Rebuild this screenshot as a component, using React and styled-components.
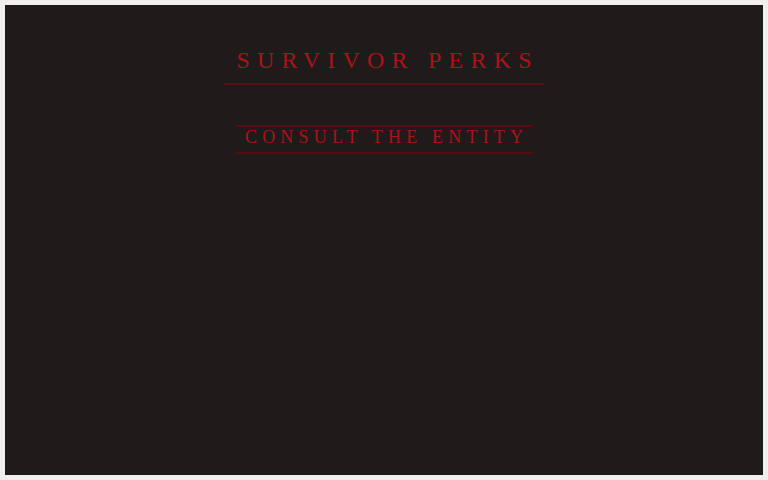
import React from "react";
import styled, { createGlobalStyle } from "styled-components";

const Global = createGlobalStyle`
  html, body {
    margin: 0;
    padding: 0;
    background: #f0efef;
  }
  #root {
    padding: 5px;
  }
`;

const Panel = styled.main`
  height: 470px;
  background: #211a1a;
  display: flex;
  flex-direction: column;
  align-items: center;
  padding-top: 43px;
  box-sizing: border-box;
`;

const rule = "2px solid #550d12";

const Title = styled.h1`
  margin: 0;
  width: 320px;
  padding-bottom: 11px;
  border-bottom: ${rule};
  font-family: "Liberation Serif", "Times New Roman", serif;
  font-weight: normal;
  font-size: 24px;
  line-height: 24px;
  letter-spacing: ${(p) => p.$spacing}px;
  text-indent: ${(p) => p.$spacing}px;
  text-align: center;
  color: #a8141b;
`;

const EntityButton = styled.button`
  margin-top: 40px;
  width: 297px;
  padding: 1px 0 6px;
  background: transparent;
  border: none;
  border-top: ${rule};
  border-bottom: ${rule};
  font-family: "Liberation Serif", "Times New Roman", serif;
  font-size: 18px;
  line-height: 18px;
  letter-spacing: ${(p) => p.$spacing}px;
  text-indent: ${(p) => p.$spacing}px;
  text-align: center;
  color: #a8141b;
  cursor: pointer;
`;

export default function App() {
  return (
    <>
      <Global />
      <Panel>
        <Title $spacing={7.2}>SURVIVOR PERKS</Title>
        <EntityButton $spacing={5.2}>CONSULT THE ENTITY</EntityButton>
      </Panel>
    </>
  );
}
